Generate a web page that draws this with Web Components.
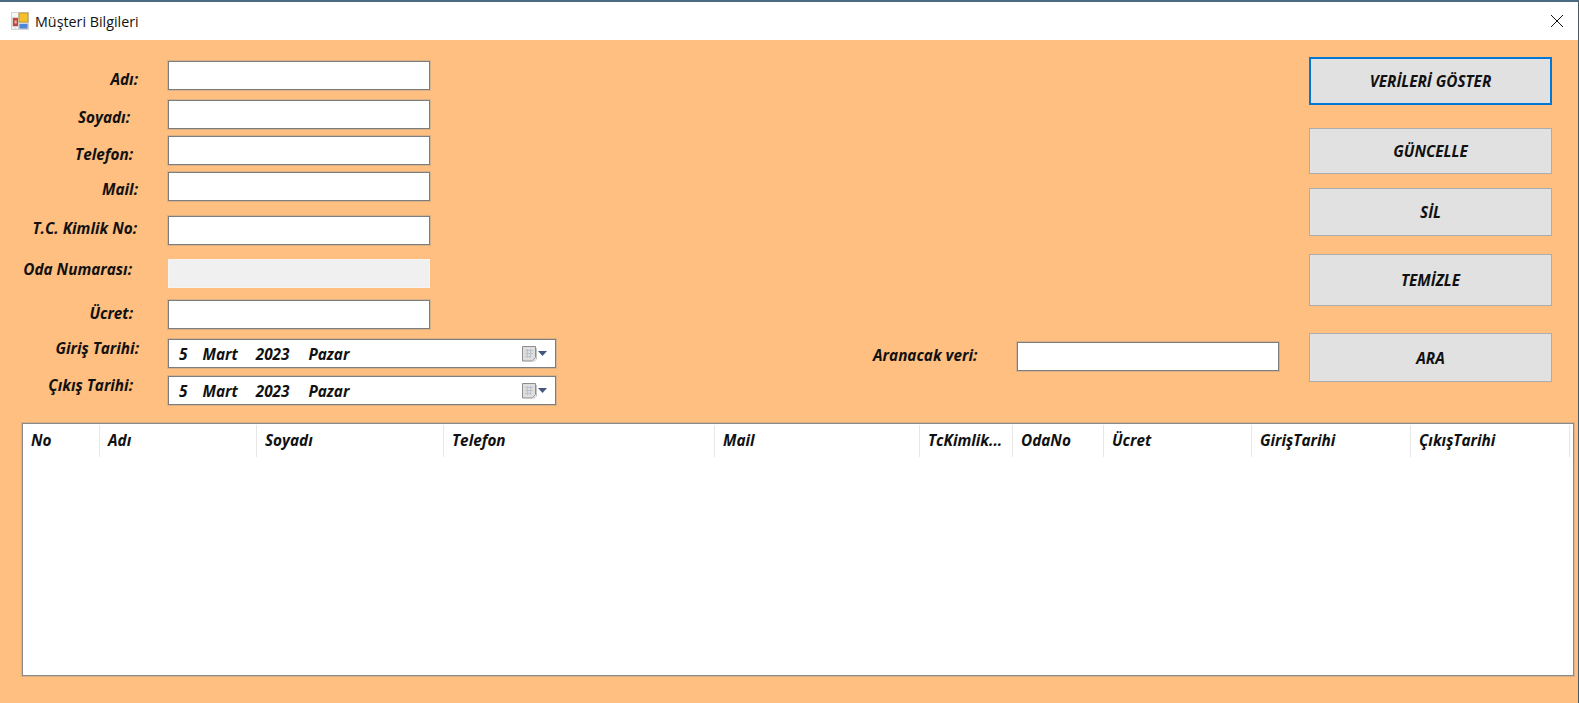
<!DOCTYPE html>
<html>
<head>
<meta charset="utf-8">
<title>Müşteri Bilgileri</title>
<style>
  html, body { margin: 0; height: 100%; overflow: hidden; background: #fff; }
  body { font: italic bold 15.3px "Open Sans", sans-serif; color: #111; }
</style>
</head>
<body>
<customer-window>
  <span slot="title">Müşteri Bilgileri</span>

  <form-row slot="form" label="Adı:" end="30" gap="0" shift="3"></form-row>
  <form-row slot="form" label="Soyadı:" end="38" gap="10" shift="2"></form-row>
  <form-row slot="form" label="Telefon:" end="35" gap="7" shift="3"></form-row>
  <form-row slot="form" label="Mail:" end="30" gap="7" shift="2"></form-row>
  <form-row slot="form" label="T.C. Kimlik No:" end="31" gap="15" shift="-3"></form-row>
  <form-row slot="form" label="Oda Numarası:" end="36" gap="14" shift="-5"></form-row>
  <form-row slot="form" label="Ücret:" end="35" gap="12" shift="-2"></form-row>
  <form-row slot="form" label="Giriş Tarihi:" end="29" gap="10" shift="-6"></form-row>
  <form-row slot="form" label="Çıkış Tarihi:" end="35" gap="8" shift="-6"></form-row>

  <form-row slot="search" label="Aranacak veri:" wide shift="-2"></form-row>

  <action-button slot="actions" h="48" focused>VERİLERİ GÖSTER</action-button>
  <action-button slot="actions" h="46" style="margin-top:23px">GÜNCELLE</action-button>
  <action-button slot="actions" h="48" style="margin-top:14px">SİL</action-button>
  <action-button slot="actions" h="52" style="margin-top:18px">TEMİZLE</action-button>
  <action-button slot="actions" h="49" style="margin-top:27px">ARA</action-button>

  <data-grid slot="grid"></data-grid>
</customer-window>

<script>
class CustomerWindow extends HTMLElement {
  constructor() {
    super();
    this.attachShadow({ mode: 'open' });
    this.shadowRoot.innerHTML = `
      <style>
        :host { display: flex; flex-direction: column; width: 1579px; height: 703px; background: #ffbf80; box-sizing: border-box; border-top: 2px solid #4a6a80; border-right: 1px solid #4d5a62; }
        .title { display: flex; align-items: center; height: 38px; background: #fff; padding: 0 14px 0 11px; font: normal 14.3px "Open Sans", sans-serif; color: #111; flex: none; }
        .title svg.app { margin-right: 6px; }
        .title .text { flex: 1; }
        .body { display: flex; flex-direction: column; flex: 1; padding: 17px 4px 27px 22px; min-height: 0; }
        .top { display: flex; height: 366px; flex: none; }
        .form { width: 851px; padding-top: 4px; display: flex; flex-direction: column; flex: none; }
        .search { display: flex; align-items: flex-start; padding-top: 285px; width: 436px; flex: none; }
        .actions { display: flex; flex-direction: column; width: 243px; flex: none; }
        .grid { flex: 1; display: flex; min-height: 0; }
        ::slotted(data-grid) { flex: 1; }
      </style>
      <div class="title">
        <svg class="app" width="18" height="18" viewBox="0 0 18 18">
          <rect width="18" height="18" fill="#d4d4d4"/>
          <rect x="1" y="1" width="6" height="4" fill="#f6f6f6"/>
          <rect x="2" y="6" width="5" height="8" fill="#c8413a"/>
          <rect x="3.5" y="8.5" width="2.2" height="3" fill="#eeb0a6"/>
          <rect x="1" y="15" width="2.5" height="2" fill="#f6f6f6"/>
          <rect x="4.5" y="15" width="2.5" height="2" fill="#f6f6f6"/>
          <rect x="8" y="1" width="9" height="9" fill="#f4c02c" stroke="#b4902c" stroke-width=".8"/>
          <rect x="8.5" y="12" width="8" height="4.5" fill="#4f86d8"/>
        </svg>
        <span class="text"><slot name="title"></slot></span>
        <svg width="14" height="14" viewBox="0 0 14 14"><path d="M1 1L13 13M13 1L1 13" stroke="#111" stroke-width="1" fill="none"/></svg>
      </div>
      <div class="body">
        <div class="top">
          <div class="form"><slot name="form"></slot></div>
          <div class="search"><slot name="search"></slot></div>
          <div class="actions"><slot name="actions"></slot></div>
        </div>
        <div class="grid"><slot name="grid"></slot></div>
      </div>`;
  }
}

class FormRow extends HTMLElement {
  constructor() {
    super();
    this.attachShadow({ mode: 'open' });
  }

  connectedCallback() {
    const label = this.getAttribute('label');
    const end = this.getAttribute('end') || 0;
    const gap = this.getAttribute('gap') || 0;
    const shift = Number(this.getAttribute('shift') || 0);
    const wide = this.hasAttribute('wide');
    const isDate = label.includes('Tarihi');
    const disabled = label.startsWith('Oda');
    const field = isDate
      ? '<date-picker></date-picker>'
      : `<text-box ${disabled ? 'disabled' : ''}></text-box>`;
    this.shadowRoot.innerHTML = `
      <style>
        :host { display: flex; align-items: flex-start; margin-top: ${gap}px; height: 29px; }
        .label { width: ${wide ? 144 : 146}px; text-align: ${wide ? 'left' : 'right'}; padding-right: ${end}px; box-sizing: border-box; line-height: 20px; margin-top: ${4.5 + shift}px; white-space: nowrap; flex: none; }
      </style>
      <span class="label">${label}</span>${field}`;
  }
}

class TextBox extends HTMLElement {
  constructor() {
    super();
    this.attachShadow({ mode: 'open' });
    this.shadowRoot.innerHTML = `
      <style>
        :host { display: block; width: 262px; height: 29px; box-sizing: border-box; background: #fff; border: 1px solid #7d7d7d; box-shadow: 0 0 0 1px rgba(150,150,150,.35); }
        :host([disabled]) { background: #f0f0f0; border-color: #f7f3ef; box-shadow: none; }
      </style>`;
  }
}

class DatePicker extends HTMLElement {
  constructor() {
    super();
    this.attachShadow({ mode: 'open' });
    this.shadowRoot.innerHTML = `
      <style>
        :host { display: flex; align-items: center; width: 388px; height: 29px; box-sizing: border-box; background: #fff; border: 1px solid #7d7d7d; box-shadow: 0 0 0 1px rgba(150,150,150,.35); padding: 0 8px 0 10px; color: #111; }
        span { white-space: nowrap; }
        .fill { flex: 1; }
        svg { display: block; }
      </style>
      <span style="margin-right:15px">5</span><span style="margin-right:18px">Mart</span><span style="margin-right:19px">2023</span><span>Pazar</span>
      <div class="fill"></div>
      <svg width="25" height="16" viewBox="0 0 25 16">
        <path d="M.5 .5h13v11l-3 3.5h-10z" fill="#dedede" stroke="#8d8d8d"/>
        <path d="M14.5 2v11l-3 3" fill="none" stroke="#c4c4c4"/>
        <path d="M3 4.5h8M3 7.5h8M3 10.5h6M5.5 3v9M8.5 3v9" stroke="#bcc2cc" fill="none"/>
        <path d="M16 5h9l-4.5 5z" fill="#43577c"/>
      </svg>`;
  }
}

class ActionButton extends HTMLElement {
  constructor() {
    super();
    this.attachShadow({ mode: 'open' });
  }

  connectedCallback() {
    const h = this.getAttribute('h') || 48;
    this.shadowRoot.innerHTML = `
      <style>
        :host { display: flex; align-items: center; justify-content: center; height: ${h}px; box-sizing: border-box; background: #e1e1e1; border: 1px solid #adadad; color: #111; }
        :host([focused]) { border: 2px solid #0078d7; }
      </style>
      <slot></slot>`;
  }
}

class DataGrid extends HTMLElement {
  constructor() {
    super();
    this.attachShadow({ mode: 'open' });
    const cols = [
      ['No', 77], ['Adı', 157], ['Soyadı', 187], ['Telefon', 271], ['Mail', 205],
      ['TcKimlik...', 93], ['OdaNo', 91], ['Ücret', 148], ['GirişTarihi', 159], ['ÇıkışTarihi', 159]
    ];
    const cells = cols.map(([name, w]) => `<div class="cell" style="width:${w}px">${name}</div>`).join('');
    this.shadowRoot.innerHTML = `
      <style>
        :host { display: block; background: #fff; border: 1px solid #8a8a8a; box-shadow: 0 0 0 1px rgba(150,150,150,.35); box-sizing: border-box; }
        .head { display: flex; height: 32px; margin-top: 1px; }
        .cell { box-sizing: border-box; padding: 0 0 0 8px; line-height: 30px; border-right: 1px solid #e6e6e6; white-space: nowrap; overflow: hidden; flex: none; }
      </style>
      <div class="head">${cells}</div>`;
  }
}

customElements.define('customer-window', CustomerWindow);
customElements.define('form-row', FormRow);
customElements.define('text-box', TextBox);
customElements.define('date-picker', DatePicker);
customElements.define('action-button', ActionButton);
customElements.define('data-grid', DataGrid);
</script>
</body>
</html>
